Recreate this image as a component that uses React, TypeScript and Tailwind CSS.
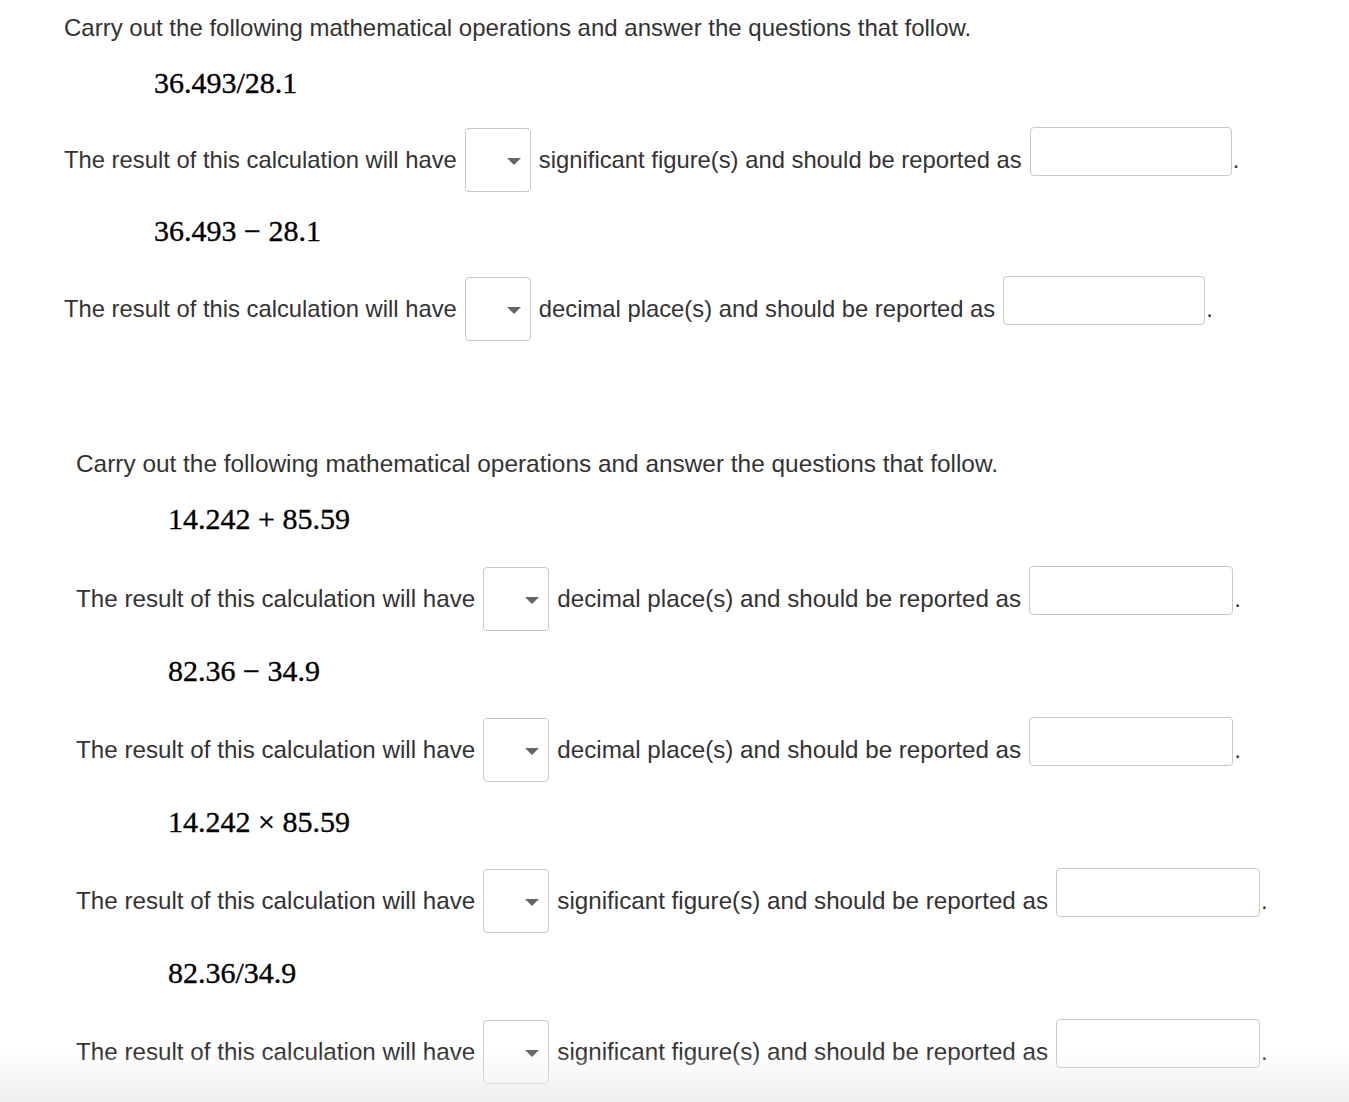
import React from 'react';

type Row = { math: string; unit: string };

const sectionTwo: Row[] = [
  { math: '14.242 + 85.59', unit: 'decimal place(s)' },
  { math: '82.36 − 34.9', unit: 'decimal place(s)' },
  { math: '14.242 × 85.59', unit: 'significant figure(s)' },
  { math: '82.36/34.9', unit: 'significant figure(s)' },
];

const mathCls = "font-['Liberation_Serif',serif] text-[30px] text-black leading-none [-webkit-text-stroke:0.35px_black]";

function Select() {
  return (
    <div className="relative w-[66px] h-[64px] shrink-0 rounded-[4px] border border-[#c8c8c8] bg-white">
      <span className="absolute right-[9px] top-[29px] w-0 h-0 border-l-[7px] border-r-[7px] border-t-[7px] border-l-transparent border-r-transparent border-t-[#666]" />
    </div>
  );
}

function AnswerRow({ unit, inputW, size }: { unit: string; inputW: string; size: string }) {
  return (
    <div className={`flex items-center gap-2 ${size}`}>
      <span>The result of this calculation will have</span>
      <Select />
      <span>{unit} and should be reported as</span>
      <div className={`${inputW} self-start -mt-px h-[49px] rounded-[4px] border border-[#c8c8c8] bg-white`} />
      <span className="-ml-[7px]">.</span>
    </div>
  );
}

export default function App() {
  return (
    <div className="relative min-h-[1102px] overflow-hidden bg-white text-[#333] font-['Liberation_Sans',Arial,sans-serif]">
      {/* first block */}
      <div className="pl-[64px] pt-[15px]">
        <p className="text-[24px] leading-[26px]">Carry out the following mathematical operations and answer the questions that follow.</p>
        <div className={`pl-[90px] pt-[27px] ${mathCls}`}>36.493/28.1</div>
        <div className="mt-[30px]">
          <AnswerRow unit="significant figure(s)" inputW="w-[202px]" size="text-[23.8px]" />
        </div>
        <div className={`pl-[90px] pt-[24px] ${mathCls}`}>36.493 − 28.1</div>
        <div className="mt-[31px]">
          <AnswerRow unit="decimal place(s)" inputW="w-[202px]" size="text-[23.8px]" />
        </div>
      </div>

      {/* second block */}
      <div className="pl-[76px] pt-[110px]">
        <p className="text-[24.4px] leading-[26px]">Carry out the following mathematical operations and answer the questions that follow.</p>
        {sectionTwo.map((r, i) => (
          <div key={i}>
            <div className={`pl-[92px] ${i === 0 ? 'pt-[27px]' : 'pt-[25px]'} ${mathCls}`}>{r.math}</div>
            <div className={i === 0 ? 'mt-[33px]' : 'mt-[32px]'}>
              <AnswerRow unit={r.unit} inputW="w-[204px]" size="text-[24.2px]" />
            </div>
          </div>
        ))}
      </div>

      <div className="pointer-events-none absolute inset-x-0 bottom-0 h-[50px] bg-gradient-to-b from-white/0 to-[#efefef]" />
    </div>
  );
}
